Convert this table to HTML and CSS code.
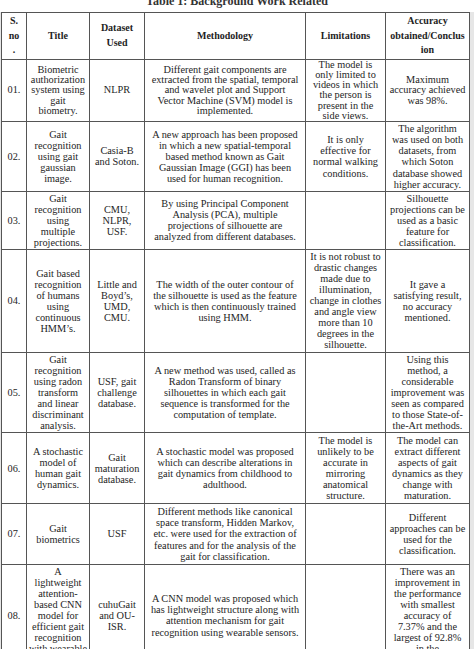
FILE: index.html
```html
<!DOCTYPE html>
<html>
<head>
<meta charset="utf-8">
<link rel="stylesheet" href="styles.css">
</head>
<body>
<div class="page">
  <div class="caption"><span class="caption-text">Table 1: Background Work Related</span></div>
  <div class="sheet">
  <table class="grid">
    <colgroup>
      <col class="c-no"><col class="c-title"><col class="c-data"><col class="c-meth"><col class="c-lim"><col class="c-acc">
    </colgroup>
    <thead>
      <tr class="head">
        <th>S.<br>no<br>.</th>
        <th>Title</th>
        <th>Dataset<br>Used</th>
        <th>Methodology</th>
        <th>Limitations</th>
        <th>Accuracy<br>obtained/Conclus<br>ion</th>
      </tr>
    </thead>
    <tbody>
      <tr class="tight">
        <td>01.</td>
        <td>Biometric<br>authorization<br>system using<br>gait<br>biometry.</td>
        <td>NLPR</td>
        <td>Different gait components are<br>extracted from the spatial, temporal<br>and wavelet plot and Support<br>Vector Machine (SVM) model is<br>implemented.</td>
        <td>The model is<br>only limited to<br>videos in which<br>the person is<br>present in the<br>side views.</td>
        <td>Maximum<br>accuracy achieved<br>was 98%.</td>
      </tr>
      <tr>
        <td>02.</td>
        <td>Gait<br>recognition<br>using gait<br>gaussian<br>image.</td>
        <td>Casia-B<br>and Soton.</td>
        <td>A new approach has been proposed<br>in which a new spatial-temporal<br>based method known as Gait<br>Gaussian Image (GGI) has been<br>used for human recognition.</td>
        <td>It is only<br>effective for<br>normal walking<br>conditions.</td>
        <td>The algorithm<br>was used on both<br>datasets, from<br>which Soton<br>database showed<br>higher accuracy.</td>
      </tr>
      <tr>
        <td>03.</td>
        <td>Gait<br>recognition<br>using<br>multiple<br>projections.</td>
        <td>CMU,<br>NLPR,<br>USF.</td>
        <td>By using Principal Component<br>Analysis (PCA), multiple<br>projections of silhouette are<br>analyzed from different databases.</td>
        <td></td>
        <td>Silhouette<br>projections can be<br>used as a basic<br>feature for<br>classification.</td>
      </tr>
      <tr>
        <td>04.</td>
        <td>Gait based<br>recognition<br>of humans<br>using<br>continuous<br>HMM’s.</td>
        <td>Little and<br>Boyd’s,<br>UMD,<br>CMU.</td>
        <td>The width of the outer contour of<br>the silhouette is used as the feature<br>which is then continuously trained<br>using HMM.</td>
        <td>It is not robust to<br>drastic changes<br>made due to<br>illumination,<br>change in clothes<br>and angle view<br>more than 10<br>degrees in the<br>silhouette.</td>
        <td>It gave a<br>satisfying result,<br>no accuracy<br>mentioned.</td>
      </tr>
      <tr>
        <td>05.</td>
        <td>Gait<br>recognition<br>using radon<br>transform<br>and linear<br>discriminant<br>analysis.</td>
        <td>USF, gait<br>challenge<br>database.</td>
        <td>A new method was used, called as<br>Radon Transform of binary<br>silhouettes in which each gait<br>sequence is transformed for the<br>computation of template.</td>
        <td></td>
        <td>Using this<br>method, a<br>considerable<br>improvement was<br>seen as compared<br>to those State-of-<br>the-Art methods.</td>
      </tr>
      <tr class="roomy">
        <td>06.</td>
        <td>A stochastic<br>model of<br>human gait<br>dynamics.</td>
        <td>Gait<br>maturation<br>database.</td>
        <td>A stochastic model was proposed<br>which can describe alterations in<br>gait dynamics from childhood to<br>adulthood.</td>
        <td>The model is<br>unlikely to be<br>accurate in<br>mirroring<br>anatomical<br>structure.</td>
        <td>The model can<br>extract different<br>aspects of gait<br>dynamics as they<br>change with<br>maturation.</td>
      </tr>
      <tr class="roomy">
        <td>07.</td>
        <td>Gait<br>biometrics</td>
        <td>USF</td>
        <td>Different methods like canonical<br>space transform, Hidden Markov,<br>etc. were used for the extraction of<br>features and for the analysis of the<br>gait for classification.</td>
        <td></td>
        <td>Different<br>approaches can be<br>used for the<br>classification.</td>
      </tr>
      <tr>
        <td>08.</td>
        <td>A<br>lightweight<br>attention-<br>based CNN<br>model for<br>efficient gait<br>recognition<br>with wearable<br>IMU sensors.</td>
        <td>cuhuGait<br>and OU-<br>ISR.</td>
        <td>A CNN model was proposed which<br>has lightweight structure along with<br>attention mechanism for gait<br>recognition using wearable sensors.</td>
        <td></td>
        <td>There was an<br>improvement in<br>the performance<br>with smallest<br>accuracy of<br>7.37% and the<br>largest of 92.8%<br>in the<br>recognition.</td>
      </tr>
    </tbody>
  </table>
  </div>
</div>
</body>
</html>
```
FILE: styles.css
```css
html, body {
  margin: 0;
  padding: 0;
  background: #ffffff;
}
.page {
  width: 474px;
  overflow: hidden;
  font-family: "Liberation Serif", "Times New Roman", serif;
  color: #1e1e1e;
}
.caption {
  height: 12px;
  overflow: hidden;
  text-align: center;
}
.caption-text {
  display: block;
  margin-top: -5px;
  font-size: 12px;
  line-height: 12px;
  font-weight: bold;
  color: #333;
}
.sheet {
  background: #e6e6e6;
  padding-left: 1px;
}
.grid {
  width: 468px;
  border-collapse: collapse;
  table-layout: fixed;
  background: #ffffff;
}
.c-no { width: 25px; }
.c-title { width: 63px; }
.c-data { width: 55px; }
.c-meth { width: 161px; }
.c-lim { width: 80px; }
.c-acc { width: 84px; }
.grid th, .grid td {
  border: 1px solid #555;
  text-align: center;
  vertical-align: middle;
  white-space: nowrap;
  overflow: hidden;
}
.grid th {
  font-size: 10px;
  line-height: 14.5px;
  font-weight: bold;
  padding: 1px 0;
}
.grid td {
  font-size: 10.3px;
  line-height: 11.07px;
  padding: 1px 0;
}
.grid .tight td {
  line-height: 10.3px;
  padding: 0;
}
.grid .roomy td {
  padding: 2px 0;
}
```
